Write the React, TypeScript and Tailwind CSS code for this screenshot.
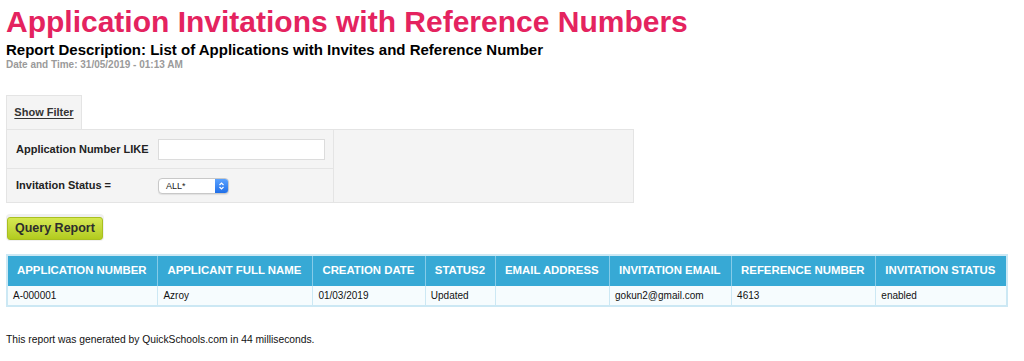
import React from "react";

const columns = [
  "APPLICATION NUMBER",
  "APPLICANT FULL NAME",
  "CREATION DATE",
  "STATUS2",
  "EMAIL ADDRESS",
  "INVITATION EMAIL",
  "REFERENCE NUMBER",
  "INVITATION STATUS",
];

const rows = [
  ["A-000001", "Azroy", "01/03/2019", "Updated", "", "gokun2@gmail.com", "4613", "enabled"],
];

const SelectBox = () => (
  <div className="flex h-[16px] w-[71px] items-stretch rounded-[4px] border border-[#c8c8c8] bg-white shadow-[0_1px_1px_rgba(0,0,0,0.08)]">
    <span className="flex-1 pl-[7px] text-[9px] leading-[14px] text-[#222]">ALL*</span>
    <span className="flex w-[13px] items-center justify-center rounded-r-[3px] bg-gradient-to-b from-[#5aa2ff] to-[#1f6fe8]">
      <svg width="7" height="10" viewBox="0 0 7 10" fill="none" stroke="white" strokeWidth="1.2">
        <path d="M1.5 4 L3.5 2 L5.5 4" />
        <path d="M1.5 6 L3.5 8 L5.5 6" />
      </svg>
    </span>
  </div>
);

export default function App() {
  return (
    <div className="min-h-[361px] bg-white px-[6px] pt-[4px] font-['Liberation_Sans',Arial,sans-serif] text-black">
      {/* Titulo */}
      <h1 className="text-[30px] font-bold leading-[36px] text-[#e4235f]">
        Application Invitations with Reference Numbers
      </h1>
      <h2 className="mt-[1px] text-[15px] font-bold leading-[17px]">
        Report Description: List of Applications with Invites and Reference Number
      </h2>
      <div className="mt-[1px] text-[10px] font-bold leading-[12px] text-[#9a9a9a]">
        Date and Time: 31/05/2019 - 01:13 AM
      </div>

      {/* Filtro */}
      <div className="mt-[24px] w-[628px]">
        <div className="flex h-[34px] w-[76px] items-center justify-center border border-b-0 border-[#e4e4e4] bg-[#f4f4f4]">
          <span className="text-[11px] font-bold text-[#333] underline underline-offset-2">Show Filter</span>
        </div>
        <div className="flex border border-[#e4e4e4] bg-[#f4f4f4]">
          <div className="w-[327px] border-r border-[#e4e4e4]">
            <div className="flex h-[39px] items-center border-b border-[#e4e4e4]">
              <span className="w-[151px] pl-[9px] text-[11px] font-bold text-[#222]">Application Number LIKE</span>
              <div className="h-[21px] w-[167px] border border-[#dcdcdc] bg-white"></div>
            </div>
            <div className="flex h-[33px] items-center">
              <span className="w-[151px] pl-[9px] text-[11px] font-bold text-[#222]">Invitation Status =</span>
              <SelectBox />
            </div>
          </div>
          <div className="flex-1"></div>
        </div>
      </div>

      {/* Boton */}
      <div className="mt-[11px] inline-block rounded-[4px] bg-[#f0f0f0] p-[1px]">
        <button className="h-[23px] rounded-[3px] border border-[#a9c020] bg-gradient-to-b from-[#d6e852] to-[#b2cb1c] px-[7px] text-[12.5px] font-bold text-[#2d2d2d]">
          Query Report
        </button>
      </div>

      {/* Tabla */}
      <table className="mt-[13px] w-[1002px] border-collapse border-2 border-[#cce8f4]">
        <thead>
          <tr className="bg-[#37a9d5]">
            {columns.map((c) => (
              <th
                key={c}
                className="h-[31px] whitespace-nowrap border-x border-[#86cbe8] px-[9px] text-left text-[11.4px] font-bold text-white"
              >
                {c}
              </th>
            ))}
          </tr>
        </thead>
        <tbody>
          {rows.map((r, i) => (
            <tr key={i} className="bg-[#f6fcfe]">
              {r.map((v, j) => (
                <td key={j} className="h-[20px] border-x border-[#cce8f4] px-[5px] text-[10px] text-[#111]">
                  {v}
                </td>
              ))}
            </tr>
          ))}
        </tbody>
      </table>

      <p className="mt-[25px] text-[10.3px] text-[#111]">
        This report was generated by QuickSchools.com in 44 milliseconds.
      </p>
    </div>
  );
}
